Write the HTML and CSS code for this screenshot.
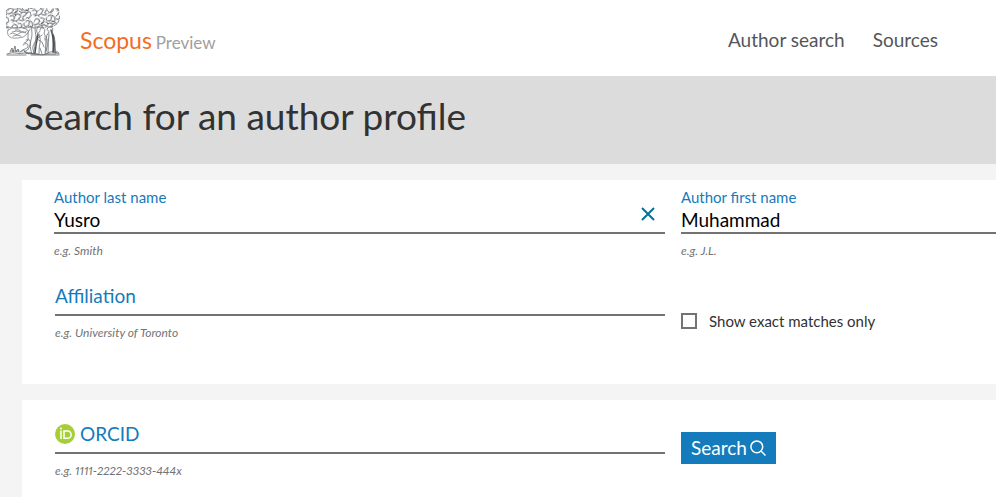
FILE: index.html
```html
<!DOCTYPE html>
<html lang="en">
<head>
<meta charset="utf-8">
<meta name="viewport" content="width=device-width, initial-scale=1">
<title>Scopus Preview - Author search</title>
<link rel="stylesheet" href="styles.css">
</head>
<body>
<header class="topbar">
  <a class="brand" href="#">
    <svg class="tree" viewBox="0 0 54 48" width="54" height="48" fill="none" stroke="#6d7176" stroke-width=".8" stroke-linecap="round" aria-hidden="true">
      <defs>
        <pattern id="leaves" width="23" height="17" patternUnits="userSpaceOnUse" patternTransform="rotate(-14)">
          <path stroke="#4f5359" stroke-width="1" d="M1 3q3-4 5-1t-2 4-4 0M8 1q4 0 3 3t-4 3q1-2 3-1M14 2q-2 3 1 4t4-3-3-2M20 1q3 2 2 5t-3 1M2 9q4-1 4 2t-4 2M7 10q1-3 4-1t0 4-4 2M13 9q3-2 5 0t-2 3q-3 0-2 3M19 10q3-2 4 1t-3 4M3 15q3-2 4 1M10 15q2 2 5 1M17 15q2-2 3 1M5 7l3 2M12 6l2 2M18 7l3 1"/>
        </pattern>
      </defs>
      <path fill="url(#leaves)" stroke-width=".8" stroke-dasharray="3 1.500" d="M2 1q3-1 5 0t5-1 5 1 6-1 6 1 6-1 6 1 6-1 5 1q2 3 0 5 3 3 1 6-1 4-4 5-3 3-7 1-5 3-9 1-5 2-9 0-5 2-9 0-5 2-9 0-5 2-8 0-2-2-1-5-3-4-1-7z"/>
      <path stroke-width=".7" d="M2 22q4-3 8-2 6-1 10 1 4 2 1 5-3 4-9 4-8 1-10-3-1-3 0-5zM6 24q5-2 9 0t6-1M4 26q3-2 5 0t5-1 6 0M7 28q4-2 8 0M9 22q4-1 6 1"/>
      <path d="M25 18q2 8 0 14t1 14M29 18q0 6 1 10t-2 8 1 10M24 21q-3 3-2 8t-4 6M20 32q6-2 4 5t-6 6q5 4 9 3M32 19q-3 4 0 7"/>
      <path d="M17 37q4-3 5 0t-3 4-5 3M15 44q3-3 4 0t6 1"/>
      <path d="M34 22q0-3 3-2t1 5q2 2 1 7M34 23q-4 4-5 13t-2 10h6q0-8 1-11t-1-9M31 31l5 3 2 5M36 27l-4 3M34 40l2 6"/>
      <path d="M41 21q1-3 4-2t1 5q3 4 3 10t1 12H39q1-9 1-14t3-8zM43 26q-1 8-1 19M41 31q1 7-1 13" stroke="#5d6267"/>
      <path d="M45 22q3 7 2 22M47 27q2 8 1 17M32 27q-2 9-3 18" stroke="#4c5157" stroke-width="1.400"/>
      <path d="M1 46q5-2 9-1t8 0 12 1 12-1 11 1M4 44l2-4 1 4 2-6 1 6 2-3 1 3M1 47h19M25 47h28M49 44q3-1 4 1M5 43h8" stroke="#606469"/>
    </svg>
    <span class="wordmark"><span class="name">Scopus</span> <span class="edition">Preview</span></span>
  </a>
  <nav class="nav" aria-label="Main">
    <a href="#">Author search</a>
    <a href="#">Sources</a>
  </nav>
</header>
<main>
  <div class="banner"><h1>Search for an author profile</h1></div>
  <form class="cards">
    <section class="card authors">
      <div class="field filled">
        <label for="last">Author last name</label>
        <div class="line">
          <input id="last" type="text" value="Yusro">
          <button class="clear" type="button" aria-label="Clear">
            <svg viewBox="0 0 14 14" width="14" height="14" stroke="#007398" stroke-width="2" aria-hidden="true"><path d="M1 1l12 12M13 1L1 13"/></svg>
          </button>
        </div>
        <p class="hint">e.g. Smith</p>
      </div>
      <div class="field filled">
        <label for="first">Author first name</label>
        <div class="line"><input id="first" type="text" value="Muhammad"></div>
        <p class="hint">e.g. J.L.</p>
      </div>
      <div class="field empty">
        <label for="affiliation">Affiliation</label>
        <div class="line"><input id="affiliation" type="text"></div>
        <p class="hint">e.g. University of Toronto</p>
      </div>
      <div class="exact">
        <input id="exact" type="checkbox">
        <label for="exact">Show exact matches only</label>
      </div>
    </section>
    <section class="card orcid">
      <div class="field empty">
        <label for="orcid">
          <svg viewBox="0 0 20 20" width="20" height="20" aria-hidden="true"><circle cx="10" cy="10" r="10" fill="#a6ce39"/><g fill="none" stroke="#fff" stroke-width="1.500"><path d="M6 6.500V15M9 7h3.500a3.600 3.600 0 0 1 0 7.300H9z"/></g><circle cx="6" cy="4.500" r="1" fill="#fff"/></svg>
          ORCID
        </label>
        <div class="line"><input id="orcid" type="text"></div>
        <p class="hint">e.g. 1111-2222-3333-444x</p>
      </div>
      <div class="action">
        <button class="search" type="submit">Search
          <svg viewBox="0 0 16 16" width="16" height="16" fill="none" stroke="#fff" stroke-width="1.500" aria-hidden="true"><circle cx="6.800" cy="6.800" r="5.900"/><path d="M11 11l4.500 4.500"/></svg>
        </button>
      </div>
    </section>
  </form>
</main>
</body>
</html>
```
FILE: styles.css
```css
* { box-sizing: border-box; }

body {
  margin: 0;
  background: #f4f4f4;
  color: #323232;
  font-family: Lato, "Noto Sans", sans-serif;
  font-size: 15px;
  line-height: 20px;
}

h1, p { margin: 0; }
a { color: inherit; text-decoration: none; }
svg { display: block; flex: none; }
input, button { font: inherit; }

.topbar {
  display: flex;
  justify-content: space-between;
  align-items: flex-start;
  padding: 8px 58px 19px 6px;
  background: #fff;
}

.brand {
  display: flex;
  align-items: flex-start;
  gap: 20px;
}

.wordmark {
  padding-top: 18px;
  line-height: 28px;
}

.name { color: #f36d21; font-size: 23px; }
.edition { color: #a0a0a0; font-size: 17px; }

.nav {
  display: flex;
  gap: 28px;
  padding-top: 18px;
  color: #53565a;
  font-size: 19px;
  line-height: 28px;
}

.banner {
  padding: 16px 24px 24px;
  background: #dcdcdc;
}

h1 {
  font-size: 37px;
  font-weight: 400;
  line-height: 48px;
}

.cards {
  display: grid;
  gap: 16px;
  padding: 16px 0 0 22px;
}

.card {
  display: grid;
  grid-template-columns: minmax(0, 611fr) minmax(0, 315fr);
  column-gap: 16px;
  padding-left: 32px;
  background: #fff;
}

.authors {
  row-gap: 21px;
  padding-top: 7px;
  padding-bottom: 41px;
}

.orcid {
  padding-top: 20px;
  padding-bottom: 16px;
}

.field label {
  display: flex;
  align-items: center;
  gap: 5px;
  color: #147bbc;
}

.line {
  display: flex;
  align-items: center;
  border-bottom: 2px solid #737373;
}

.line input {
  flex: 1;
  min-width: 0;
  width: 100%;
  padding: 0;
  border: 0;
  outline: 0;
  background: transparent;
  color: #000;
  font-size: 19px;
}

.filled .line { height: 27px; }
.filled .line input { height: 24px; }

.empty { padding-left: 1px; }

.empty label {
  font-size: 19px;
  line-height: 28px;
}

.empty .line { height: 6px; }
.empty .line input { height: 4px; }

.clear {
  padding: 0;
  margin: 0 10px 12px;
  border: 0;
  background: none;
}

.hint {
  padding-top: 7px;
  color: #737373;
  font-size: 12px;
  font-style: italic;
  font-variant-numeric: proportional-nums;
}

.exact {
  display: flex;
  align-items: center;
  gap: 12px;
  padding-top: 17px;
}

.exact input {
  appearance: none;
  width: 16px;
  height: 16px;
  margin: 0;
  border: 2px solid #737373;
  background: #fff;
}

.exact input:checked { background: #147bbc; }

.action { padding-top: 12px; }

.search {
  display: flex;
  align-items: center;
  gap: 3px;
  height: 32px;
  padding: 0 10px 1px;
  border: 0;
  background: #147bbc;
  color: #fff;
  font-size: 19px;
}
```
